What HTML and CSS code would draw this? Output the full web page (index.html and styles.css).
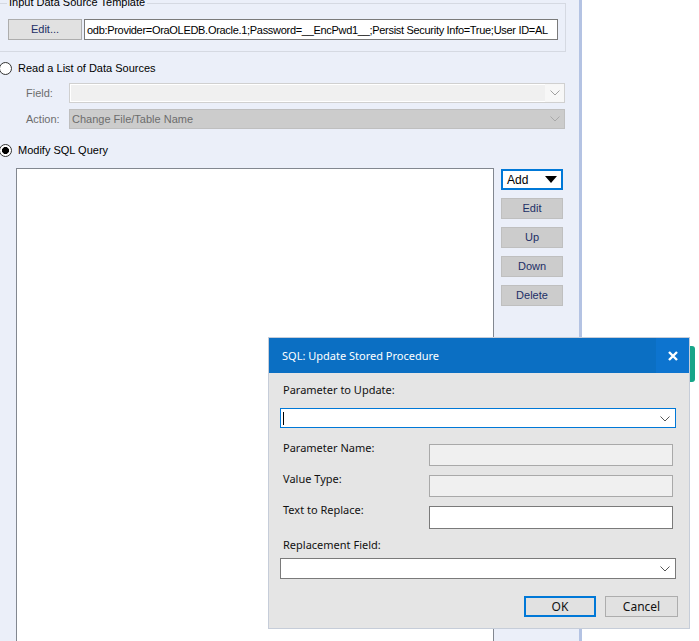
FILE: index.html
```html
<!DOCTYPE html>
<html>
<head>
<meta charset="utf-8">
<link rel="stylesheet" href="styles.css">
</head>
<body>
<div class="app">
  <div class="panel">
    <div class="group">
      <span class="legend">Input Data Source Template</span>
      <div class="group-row">
        <div class="btn btn-gray btn-edit">Edit...</div>
        <div class="textbox conn">odb:Provider=OraOLEDB.Oracle.1;Password=__EncPwd1__;Persist Security Info=True;User ID=AL</div>
      </div>
    </div>

    <div class="radio-row first">
      <span class="radio"></span>
      <span class="radio-label">Read a List of Data Sources</span>
    </div>

    <div class="field-row field">
      <span class="field-label">Field:</span>
      <div class="combo combo-disabled-light">
        <span class="combo-text"></span>
        <span class="combo-arrow-box">
          <svg width="10" height="6" viewBox="0 0 10 6"><polyline points="0.5,0.5 5,5 9.5,0.5" fill="none" stroke="#a0a0a0" stroke-width="1"/></svg>
        </span>
      </div>
    </div>

    <div class="field-row action">
      <span class="field-label">Action:</span>
      <div class="combo combo-disabled">
        <span class="combo-text">Change File/Table Name</span>
        <span class="combo-arrow-box">
          <svg width="10" height="6" viewBox="0 0 10 6"><polyline points="0.5,0.5 5,5 9.5,0.5" fill="none" stroke="#a8a8a8" stroke-width="1"/></svg>
        </span>
      </div>
    </div>

    <div class="radio-row second">
      <span class="radio checked"></span>
      <span class="radio-label">Modify SQL Query</span>
    </div>

    <div class="main-area">
      <div class="sql-box"></div>
      <div class="side-buttons">
        <div class="btn btn-add"><span>Add</span>
          <svg width="12" height="7" viewBox="0 0 12 7"><polygon points="0,0 12,0 6,7" fill="#000"/></svg>
        </div>
        <div class="btn btn-gray btn-side">Edit</div>
        <div class="btn btn-gray btn-side">Up</div>
        <div class="btn btn-gray btn-side">Down</div>
        <div class="btn btn-gray btn-side">Delete</div>
      </div>
    </div>
  </div>

  <div class="teal-tab"></div>

  <div class="dialog">
    <div class="title-bar">
      <span class="title-text">SQL: Update Stored Procedure</span>
      <span class="close-btn">
        <svg width="10" height="10" viewBox="0 0 10 10"><path d="M1 1 L9 9 M9 1 L1 9" stroke="#fff" stroke-width="2.4" fill="none"/></svg>
      </span>
    </div>
    <div class="dialog-body">
      <div class="d-label top-label">Parameter to Update:</div>
      <div class="d-combo focused">
        <span class="caret"></span>
        <svg class="d-chev" width="10" height="6" viewBox="0 0 10 6"><polyline points="0.5,0.5 5,5 9.5,0.5" fill="none" stroke="#555" stroke-width="1"/></svg>
      </div>

      <div class="d-row r1">
        <span class="d-label">Parameter Name:</span>
        <div class="d-input disabled"></div>
      </div>
      <div class="d-row r2">
        <span class="d-label">Value Type:</span>
        <div class="d-input disabled"></div>
      </div>
      <div class="d-row r3">
        <span class="d-label">Text to Replace:</span>
        <div class="d-input"></div>
      </div>

      <div class="d-label repl-label">Replacement Field:</div>
      <div class="d-combo repl">
        <svg class="d-chev" width="10" height="6" viewBox="0 0 10 6"><polyline points="0.5,0.5 5,5 9.5,0.5" fill="none" stroke="#555" stroke-width="1"/></svg>
      </div>

      <div class="d-buttons">
        <div class="d-btn ok">OK</div>
        <div class="d-btn">Cancel</div>
      </div>
    </div>
  </div>
</div>
</body>
</html>
```

FILE: styles.css
```css
* { box-sizing: border-box; }
html, body { margin: 0; padding: 0; background: #ffffff; }
body { font-family: "Liberation Sans", Arial, sans-serif; font-size: 11px; color: #000; }

.app {
  position: relative;
  width: 699px;
  height: 641px;
  overflow: hidden;
  background: #ffffff;
}

.panel {
  width: 582px;
  height: 641px;
  background: #ebeff9;
  border-right: 3px solid #b4c3e3;
  overflow: hidden;
}

/* group box */
.group {
  position: relative;
  margin: 3px 0 0 -2px;
  width: 568px;
  height: 49px;
  border: 1px solid #d5d9e2;
  padding: 15px 0 0 9px;
}
.legend {
  position: absolute;
  top: -8px;
  left: 8px;
  padding: 0 2px;
  background: #ebeff9;
  line-height: 13px;
  color: #000;
}
.group-row { display: flex; gap: 2px; }

.btn {
  display: flex;
  align-items: center;
  justify-content: center;
  height: 21px;
  line-height: 1;
}
.btn-gray {
  background: #e1e1e1;
  border: 1px solid #adadad;
  color: #1d2f66;
}
.btn-edit { width: 74px; }
.textbox {
  height: 21px;
  background: #fff;
  border: 1px solid #7a7a7a;
  padding: 0 0 0 2px;
  display: flex;
  align-items: center;
}
.conn { width: 474px; overflow: hidden; white-space: nowrap; letter-spacing: -0.3px; }

/* radios */
.radio-row { display: flex; align-items: center; height: 14px; margin-left: -1px; }
.radio-row.first { margin-top: 9px; }
.radio-row.second { margin-top: 14px; }
.radio {
  width: 13px;
  height: 13px;
  border-radius: 50%;
  border: 1px solid #333;
  background: #fff;
  flex: none;
}
.radio.checked { background: radial-gradient(circle, #000 0 3.2px, #fff 3.8px); }
.radio-label { margin-left: 6px; }

/* field rows */
.field-row { display: flex; align-items: center; height: 20px; padding-left: 26px; }
.field { margin-top: 8px; }
.action { margin-top: 6px; }
.field-label { width: 43px; color: #6d6d6d; }
.combo {
  width: 496px;
  height: 20px;
  display: flex;
  align-items: center;
}
.combo-disabled-light { background: #f0f0f0; border: 1px solid #d0d0d0; box-shadow: inset 0 0 0 1px #ffffff; }
.combo-disabled { background: #cccccc; border: 1px solid #bfbfbf; }
.combo-text { flex: 1; padding-left: 2px; color: #6d6d6d; }
.combo-arrow-box {
  width: 19px;
  height: 100%;
  display: flex;
  align-items: center;
  justify-content: center;
}
.combo-disabled-light .combo-arrow-box { background: #f7f7f7; }

/* main area */
.main-area { display: flex; gap: 7px; padding-left: 16px; margin-top: 11px; }
.sql-box { width: 478px; height: 520px; background: #fff; border: 1px solid #828790; }
.side-buttons { display: flex; flex-direction: column; gap: 8px; padding-top: 1px; }
.btn-add {
  width: 62px;
  background: #fff;
  border: 2px solid #0078d7;
  justify-content: space-between;
  padding: 0 4px 0 4px;
  color: #000;
  font-size: 12px;
}
.btn-side { width: 62px; background: #cccccc; border-color: #bfbfbf; }

/* teal tab behind dialog */
.teal-tab {
  position: absolute;
  left: 686px;
  top: 346px;
  width: 9px;
  height: 36px;
  background: #17a589;
  border-radius: 3px;
}

/* dialog */
.dialog {
  position: absolute;
  left: 268px;
  top: 337px;
  width: 422px;
  height: 292px;
  background: #e5e5e5;
  border: 1px solid #c6cdd9;
  font-family: "Noto Sans", "Open Sans", sans-serif;
  font-size: 11px;
  color: #111;
}
.title-bar {
  height: 35px;
  background: #0b6fc3;
  display: flex;
  align-items: center;
  justify-content: space-between;
  padding-left: 13px;
}
.title-text { color: #fff; font-size: 11px; }
.close-btn {
  width: 33px;
  height: 35px;
  background: #0d74cf;
  display: flex;
  align-items: center;
  justify-content: center;
}
.dialog-body { padding: 0 11px 0 11px; }
.d-label { line-height: 15px; }
.top-label { margin: 9px 0 0 3px; }
.d-combo {
  position: relative;
  margin-top: 11px;
  width: 396px;
  height: 20px;
  background: #fff;
  border: 1px solid #7a7a7a;
  display: flex;
  align-items: center;
}
.d-combo.focused { border-color: #0078d7; }
.caret { width: 1px; height: 13px; background: #000; margin-left: 2px; }
.d-chev { position: absolute; right: 5px; top: 7px; }

.d-row { display: flex; align-items: flex-start; padding-left: 3px; }
.d-row .d-label { width: 146px; padding-top: 0; margin-top: -4px; }
.r1 { margin-top: 16px; }
.r2, .r3 { margin-top: 9px; }
.d-input { width: 244px; height: 22px; border: 1px solid #7a7a7a; background: #fff; }
.d-input.disabled { background: #f0f0f0; border-color: #a9a9a9; }
.r3 .d-input { height: 23px; }

.repl-label { margin: 8px 0 0 3px; }
.d-combo.repl { margin-top: 6px; height: 21px; }

.d-buttons { display: flex; justify-content: flex-end; gap: 9px; margin-top: 17px; }
.d-btn {
  width: 73px;
  height: 21px;
  background: #e1e1e1;
  border: 1px solid #adadad;
  display: flex;
  align-items: center;
  justify-content: center;
  font-size: 12px;
}
.d-btn.ok { width: 72px; border: 2px solid #0078d7; }
```
